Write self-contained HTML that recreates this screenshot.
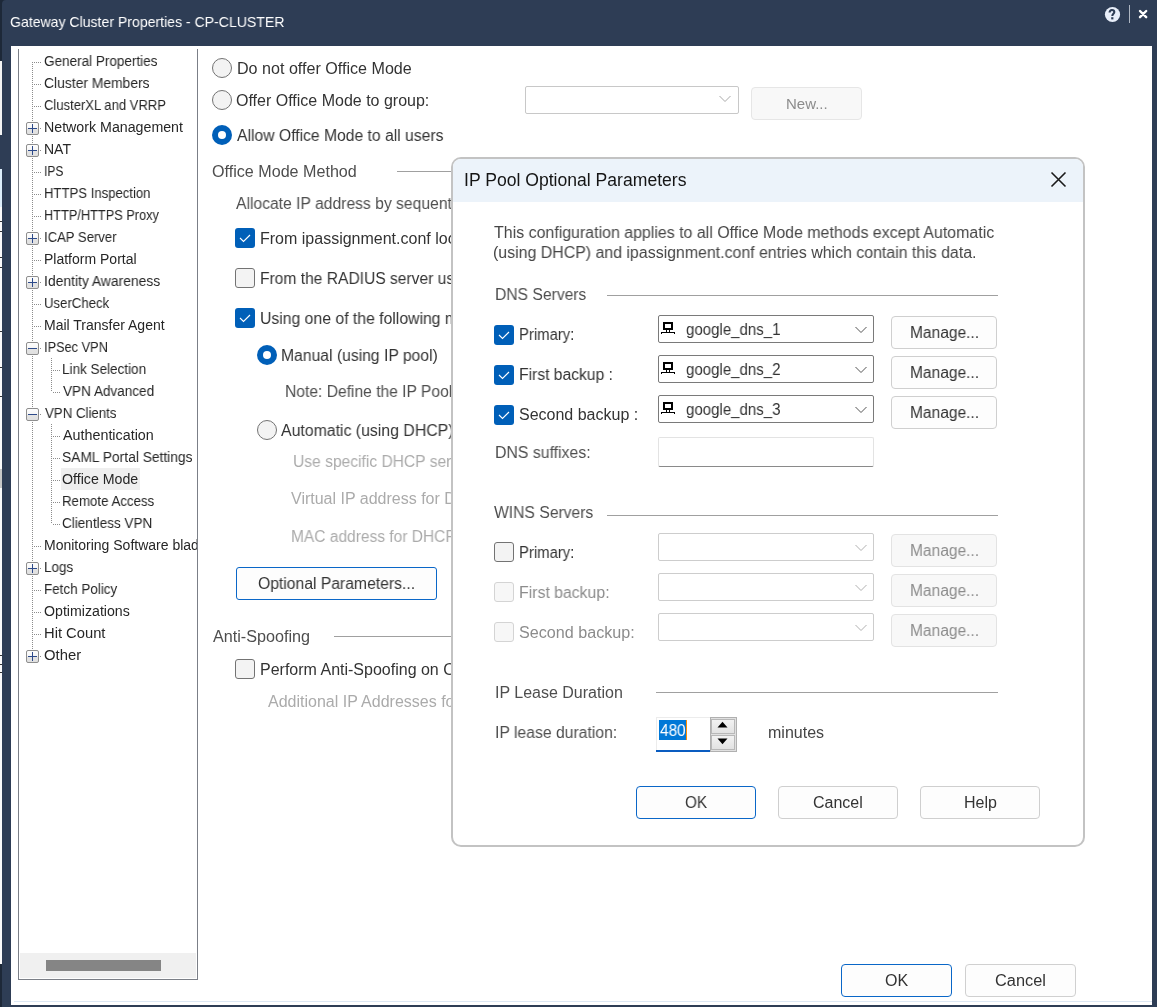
<!DOCTYPE html><html><head><meta charset="utf-8"><title>Gateway Cluster Properties</title><style>
html,body{margin:0;padding:0}body{width:1157px;height:1007px;position:relative;overflow:hidden;background:#fff;font-family:"Liberation Sans",sans-serif}
.t{position:absolute;white-space:nowrap;transform-origin:0 0;will-change:transform}
div{box-sizing:border-box}
</style></head><body>
<div style="position:absolute;left:0px;top:0px;width:8px;height:61px;background:#1d2838"></div>
<div style="position:absolute;left:0px;top:61px;width:2px;height:74px;background:#f4f4f4"></div>
<div style="position:absolute;left:0px;top:135px;width:2px;height:34px;background:#2e3d55"></div>
<div style="position:absolute;left:0px;top:169px;width:2px;height:38px;background:#ddeefa"></div>
<div style="position:absolute;left:0px;top:207px;width:2px;height:757px;background:#fafafa"></div>
<div style="position:absolute;left:0px;top:221px;width:2px;height:1px;background:#333"></div>
<div style="position:absolute;left:0px;top:231px;width:2px;height:1px;background:#333"></div>
<div style="position:absolute;left:0px;top:257px;width:2px;height:1px;background:#333"></div>
<div style="position:absolute;left:0px;top:267px;width:2px;height:1px;background:#333"></div>
<div style="position:absolute;left:0px;top:331px;width:2px;height:1px;background:#333"></div>
<div style="position:absolute;left:0px;top:367px;width:2px;height:1px;background:#333"></div>
<div style="position:absolute;left:0px;top:396px;width:2px;height:1px;background:#333"></div>
<div style="position:absolute;left:0px;top:655px;width:2px;height:1px;background:#333"></div>
<div style="position:absolute;left:0px;top:664px;width:2px;height:1px;background:#333"></div>
<div style="position:absolute;left:0px;top:672px;width:2px;height:1px;background:#333"></div>
<div style="position:absolute;left:0px;top:469px;width:2px;height:19px;background:#c8c8c8"></div>
<div style="position:absolute;left:0px;top:964px;width:2px;height:43px;background:#1d2838"></div>
<div style="position:absolute;left:2px;top:0px;width:1155px;height:1007px;background:#2e3d55;border-top-left-radius:4px"></div>
<div style="position:absolute;left:11px;top:46px;width:1141px;height:959px;background:#fff"></div>
<div class="t" style="left:10.06px;top:14px;font-size:15px;line-height:15px;color:#ffffff;transform:scaleX(0.9381);">Gateway Cluster Properties - CP-CLUSTER</div>
<svg style="position:absolute;left:1104px;top:6px" width="18" height="18" viewBox="0 0 18 18"><circle cx="8.5" cy="8.5" r="7.6" fill="#e8eef9"/><path d="M5.6 6.6 C5.6 4.8 6.6 4 7.9 4 C9.3 4 10.3 4.9 10.3 6.1 C10.3 7.7 8.3 7.9 8.3 9.9" fill="none" stroke="#2e3d55" stroke-width="2.1"/><rect x="7.2" y="11.2" width="2.2" height="2.2" fill="#2e3d55"/></svg>
<div style="position:absolute;left:1129px;top:5px;width:1px;height:18px;background:#aeb6c2"></div>
<svg style="position:absolute;left:1137px;top:8px" width="12" height="12" viewBox="0 0 12 12"><path d="M3 3 L9.2 9.2 M9.2 3 L3 9.2" stroke="#ffffff" stroke-width="2.4" stroke-linecap="round"/></svg>
<div style="position:absolute;left:18px;top:49px;width:1px;height:931px;background:#7b7f87"></div>
<div style="position:absolute;left:197px;top:49px;width:1px;height:931px;background:#7b7f87"></div>
<div style="position:absolute;left:18px;top:979px;width:180px;height:1px;background:#7b7f87"></div>
<div style="position:absolute;left:20px;top:953px;width:176px;height:25px;background:#f0f0f0"></div>
<div style="position:absolute;left:46px;top:960px;width:115px;height:11px;background:#858585"></div>
<div style="position:absolute;left:19px;top:49px;width:178px;height:904px;overflow:hidden">
<div style="position:absolute;left:42px;top:419px;width:79px;height:22px;background:#efefef"></div>
<div style="position:absolute;left:13px;top:13px;width:1px;height:595px;background-image:linear-gradient(to bottom,#8c8c8c 50%,transparent 50%);background-size:1px 2px"></div>
<div style="position:absolute;left:32px;top:309px;width:1px;height:34px;background-image:linear-gradient(to bottom,#8c8c8c 50%,transparent 50%);background-size:1px 2px"></div>
<div style="position:absolute;left:32px;top:375px;width:1px;height:100px;background-image:linear-gradient(to bottom,#8c8c8c 50%,transparent 50%);background-size:1px 2px"></div>
<div style="position:absolute;left:15px;top:13px;width:8px;height:1px;background-image:linear-gradient(to right,#8c8c8c 50%,transparent 50%);background-size:2px 1px"></div>
<div class="t" style="left:25.03px;top:5px;font-size:14px;line-height:14px;color:#262626;transform:scaleX(0.9655);">General Properties</div>
<div style="position:absolute;left:15px;top:35px;width:8px;height:1px;background-image:linear-gradient(to right,#8c8c8c 50%,transparent 50%);background-size:2px 1px"></div>
<div class="t" style="left:25.01px;top:27px;font-size:14px;line-height:14px;color:#262626;transform:scaleX(0.9905);">Cluster Members</div>
<div style="position:absolute;left:15px;top:57px;width:8px;height:1px;background-image:linear-gradient(to right,#8c8c8c 50%,transparent 50%);background-size:2px 1px"></div>
<div class="t" style="left:25.07px;top:49px;font-size:14px;line-height:14px;color:#262626;transform:scaleX(0.9308);">ClusterXL and VRRP</div>
<div style="position:absolute;left:15px;top:79px;width:8px;height:1px;background-image:linear-gradient(to right,#8c8c8c 50%,transparent 50%);background-size:2px 1px"></div>
<div class="t" style="left:24.99px;top:71px;font-size:14px;line-height:14px;color:#262626;transform:scaleX(1.0147);">Network Management</div>
<div style="position:absolute;left:15px;top:101px;width:8px;height:1px;background-image:linear-gradient(to right,#8c8c8c 50%,transparent 50%);background-size:2px 1px"></div>
<div class="t" style="left:25.00px;top:93px;font-size:14px;line-height:14px;color:#262626;">NAT</div>
<div style="position:absolute;left:15px;top:123px;width:8px;height:1px;background-image:linear-gradient(to right,#8c8c8c 50%,transparent 50%);background-size:2px 1px"></div>
<div class="t" style="left:25.14px;top:115px;font-size:14px;line-height:14px;color:#262626;transform:scaleX(0.8571);">IPS</div>
<div style="position:absolute;left:15px;top:145px;width:8px;height:1px;background-image:linear-gradient(to right,#8c8c8c 50%,transparent 50%);background-size:2px 1px"></div>
<div class="t" style="left:25.06px;top:137px;font-size:14px;line-height:14px;color:#262626;transform:scaleX(0.9375);">HTTPS Inspection</div>
<div style="position:absolute;left:15px;top:167px;width:8px;height:1px;background-image:linear-gradient(to right,#8c8c8c 50%,transparent 50%);background-size:2px 1px"></div>
<div class="t" style="left:25.09px;top:159px;font-size:14px;line-height:14px;color:#262626;transform:scaleX(0.9120);">HTTP/HTTPS Proxy</div>
<div style="position:absolute;left:15px;top:189px;width:8px;height:1px;background-image:linear-gradient(to right,#8c8c8c 50%,transparent 50%);background-size:2px 1px"></div>
<div class="t" style="left:25.06px;top:181px;font-size:14px;line-height:14px;color:#262626;transform:scaleX(0.9351);">ICAP Server</div>
<div style="position:absolute;left:15px;top:211px;width:8px;height:1px;background-image:linear-gradient(to right,#8c8c8c 50%,transparent 50%);background-size:2px 1px"></div>
<div class="t" style="left:25.00px;top:203px;font-size:14px;line-height:14px;color:#262626;">Platform Portal</div>
<div style="position:absolute;left:15px;top:233px;width:8px;height:1px;background-image:linear-gradient(to right,#8c8c8c 50%,transparent 50%);background-size:2px 1px"></div>
<div class="t" style="left:25.01px;top:225px;font-size:14px;line-height:14px;color:#262626;transform:scaleX(0.9914);">Identity Awareness</div>
<div style="position:absolute;left:15px;top:255px;width:8px;height:1px;background-image:linear-gradient(to right,#8c8c8c 50%,transparent 50%);background-size:2px 1px"></div>
<div class="t" style="left:25.06px;top:247px;font-size:14px;line-height:14px;color:#262626;transform:scaleX(0.9412);">UserCheck</div>
<div style="position:absolute;left:15px;top:277px;width:8px;height:1px;background-image:linear-gradient(to right,#8c8c8c 50%,transparent 50%);background-size:2px 1px"></div>
<div class="t" style="left:25.00px;top:269px;font-size:14px;line-height:14px;color:#262626;">Mail Transfer Agent</div>
<div style="position:absolute;left:15px;top:299px;width:8px;height:1px;background-image:linear-gradient(to right,#8c8c8c 50%,transparent 50%);background-size:2px 1px"></div>
<div class="t" style="left:25.09px;top:291px;font-size:14px;line-height:14px;color:#262626;transform:scaleX(0.9118);">IPSec VPN</div>
<div style="position:absolute;left:34px;top:321px;width:8px;height:1px;background-image:linear-gradient(to right,#8c8c8c 50%,transparent 50%);background-size:2px 1px"></div>
<div class="t" style="left:43.03px;top:313px;font-size:14px;line-height:14px;color:#262626;transform:scaleX(0.9651);">Link Selection</div>
<div style="position:absolute;left:34px;top:343px;width:8px;height:1px;background-image:linear-gradient(to right,#8c8c8c 50%,transparent 50%);background-size:2px 1px"></div>
<div class="t" style="left:44.00px;top:335px;font-size:14px;line-height:14px;color:#262626;transform:scaleX(0.9681);">VPN Advanced</div>
<div style="position:absolute;left:15px;top:365px;width:8px;height:1px;background-image:linear-gradient(to right,#8c8c8c 50%,transparent 50%);background-size:2px 1px"></div>
<div class="t" style="left:26.00px;top:357px;font-size:14px;line-height:14px;color:#262626;transform:scaleX(0.9467);">VPN Clients</div>
<div style="position:absolute;left:34px;top:387px;width:8px;height:1px;background-image:linear-gradient(to right,#8c8c8c 50%,transparent 50%);background-size:2px 1px"></div>
<div class="t" style="left:44.00px;top:379px;font-size:14px;line-height:14px;color:#262626;transform:scaleX(1.0227);">Authentication</div>
<div style="position:absolute;left:34px;top:409px;width:8px;height:1px;background-image:linear-gradient(to right,#8c8c8c 50%,transparent 50%);background-size:2px 1px"></div>
<div class="t" style="left:43.02px;top:401px;font-size:14px;line-height:14px;color:#262626;transform:scaleX(0.9847);">SAML Portal Settings</div>
<div style="position:absolute;left:34px;top:431px;width:8px;height:1px;background-image:linear-gradient(to right,#8c8c8c 50%,transparent 50%);background-size:2px 1px"></div>
<div class="t" style="left:42.99px;top:423px;font-size:14px;line-height:14px;color:#262626;transform:scaleX(1.0135);">Office Mode</div>
<div style="position:absolute;left:34px;top:453px;width:8px;height:1px;background-image:linear-gradient(to right,#8c8c8c 50%,transparent 50%);background-size:2px 1px"></div>
<div class="t" style="left:43.05px;top:445px;font-size:14px;line-height:14px;color:#262626;transform:scaleX(0.9479);">Remote Access</div>
<div style="position:absolute;left:34px;top:475px;width:8px;height:1px;background-image:linear-gradient(to right,#8c8c8c 50%,transparent 50%);background-size:2px 1px"></div>
<div class="t" style="left:43.03px;top:467px;font-size:14px;line-height:14px;color:#262626;transform:scaleX(0.9670);">Clientless VPN</div>
<div style="position:absolute;left:15px;top:497px;width:8px;height:1px;background-image:linear-gradient(to right,#8c8c8c 50%,transparent 50%);background-size:2px 1px"></div>
<div class="t" style="left:25.00px;top:489px;font-size:14px;line-height:14px;color:#262626;">Monitoring Software blades</div>
<div style="position:absolute;left:15px;top:519px;width:8px;height:1px;background-image:linear-gradient(to right,#8c8c8c 50%,transparent 50%);background-size:2px 1px"></div>
<div class="t" style="left:25.03px;top:511px;font-size:14px;line-height:14px;color:#262626;transform:scaleX(0.9655);">Logs</div>
<div style="position:absolute;left:15px;top:541px;width:8px;height:1px;background-image:linear-gradient(to right,#8c8c8c 50%,transparent 50%);background-size:2px 1px"></div>
<div class="t" style="left:25.04px;top:533px;font-size:14px;line-height:14px;color:#262626;transform:scaleX(0.9600);">Fetch Policy</div>
<div style="position:absolute;left:15px;top:563px;width:8px;height:1px;background-image:linear-gradient(to right,#8c8c8c 50%,transparent 50%);background-size:2px 1px"></div>
<div class="t" style="left:24.99px;top:555px;font-size:14px;line-height:14px;color:#262626;transform:scaleX(1.0120);">Optimizations</div>
<div style="position:absolute;left:15px;top:585px;width:8px;height:1px;background-image:linear-gradient(to right,#8c8c8c 50%,transparent 50%);background-size:2px 1px"></div>
<div class="t" style="left:24.95px;top:577px;font-size:14px;line-height:14px;color:#262626;transform:scaleX(1.0526);">Hit Count</div>
<div style="position:absolute;left:15px;top:607px;width:8px;height:1px;background-image:linear-gradient(to right,#8c8c8c 50%,transparent 50%);background-size:2px 1px"></div>
<div class="t" style="left:24.94px;top:599px;font-size:14px;line-height:14px;color:#262626;transform:scaleX(1.0588);">Other</div>
<div style="position:absolute;left:7px;top:73px;width:13px;height:13px;background:linear-gradient(#fdfdfd 0%,#f6f6f6 45%,#e3e3e3 55%,#e0e0e0 100%);border:1px solid #8e8e8e;border-radius:2px"></div>
<div style="position:absolute;left:9px;top:79px;width:9px;height:1px;background:#2d4a8a"></div>
<div style="position:absolute;left:13px;top:75px;width:1px;height:9px;background:#2d4a8a"></div>
<div style="position:absolute;left:7px;top:95px;width:13px;height:13px;background:linear-gradient(#fdfdfd 0%,#f6f6f6 45%,#e3e3e3 55%,#e0e0e0 100%);border:1px solid #8e8e8e;border-radius:2px"></div>
<div style="position:absolute;left:9px;top:101px;width:9px;height:1px;background:#2d4a8a"></div>
<div style="position:absolute;left:13px;top:97px;width:1px;height:9px;background:#2d4a8a"></div>
<div style="position:absolute;left:7px;top:183px;width:13px;height:13px;background:linear-gradient(#fdfdfd 0%,#f6f6f6 45%,#e3e3e3 55%,#e0e0e0 100%);border:1px solid #8e8e8e;border-radius:2px"></div>
<div style="position:absolute;left:9px;top:189px;width:9px;height:1px;background:#2d4a8a"></div>
<div style="position:absolute;left:13px;top:185px;width:1px;height:9px;background:#2d4a8a"></div>
<div style="position:absolute;left:7px;top:227px;width:13px;height:13px;background:linear-gradient(#fdfdfd 0%,#f6f6f6 45%,#e3e3e3 55%,#e0e0e0 100%);border:1px solid #8e8e8e;border-radius:2px"></div>
<div style="position:absolute;left:9px;top:233px;width:9px;height:1px;background:#2d4a8a"></div>
<div style="position:absolute;left:13px;top:229px;width:1px;height:9px;background:#2d4a8a"></div>
<div style="position:absolute;left:7px;top:293px;width:13px;height:13px;background:linear-gradient(#fdfdfd 0%,#f6f6f6 45%,#e3e3e3 55%,#e0e0e0 100%);border:1px solid #8e8e8e;border-radius:2px"></div>
<div style="position:absolute;left:9px;top:299px;width:9px;height:1px;background:#2d4a8a"></div>
<div style="position:absolute;left:7px;top:359px;width:13px;height:13px;background:linear-gradient(#fdfdfd 0%,#f6f6f6 45%,#e3e3e3 55%,#e0e0e0 100%);border:1px solid #8e8e8e;border-radius:2px"></div>
<div style="position:absolute;left:9px;top:365px;width:9px;height:1px;background:#2d4a8a"></div>
<div style="position:absolute;left:7px;top:513px;width:13px;height:13px;background:linear-gradient(#fdfdfd 0%,#f6f6f6 45%,#e3e3e3 55%,#e0e0e0 100%);border:1px solid #8e8e8e;border-radius:2px"></div>
<div style="position:absolute;left:9px;top:519px;width:9px;height:1px;background:#2d4a8a"></div>
<div style="position:absolute;left:13px;top:515px;width:1px;height:9px;background:#2d4a8a"></div>
<div style="position:absolute;left:7px;top:601px;width:13px;height:13px;background:linear-gradient(#fdfdfd 0%,#f6f6f6 45%,#e3e3e3 55%,#e0e0e0 100%);border:1px solid #8e8e8e;border-radius:2px"></div>
<div style="position:absolute;left:9px;top:607px;width:9px;height:1px;background:#2d4a8a"></div>
<div style="position:absolute;left:13px;top:603px;width:1px;height:9px;background:#2d4a8a"></div>
</div>
<div style="position:absolute;left:212px;top:58px;width:20px;height:20px;border-radius:50%;background:#f3f3f3;border:1px solid #737373"></div>
<div class="t" style="left:236.99px;top:61px;font-size:16px;line-height:16px;color:#333333;transform:scaleX(1.0058);">Do not offer Office Mode</div>
<div style="position:absolute;left:212px;top:90px;width:20px;height:20px;border-radius:50%;background:#f3f3f3;border:1px solid #737373"></div>
<div class="t" style="left:236.00px;top:93px;font-size:16px;line-height:16px;color:#333333;">Offer Office Mode to group:</div>
<div style="position:absolute;left:525px;top:86px;width:214px;height:28px;border:1px solid #c8c8c8;border-radius:2px;background:#fff"></div>
<svg style="position:absolute;left:719px;top:95px" width="12" height="8" viewBox="0 0 12 8"><path d="M0.5 1 L6 6.5 L11.5 1" fill="none" stroke="#a8a8a8" stroke-width="1"/></svg>
<div style="position:absolute;left:751px;top:87px;width:111px;height:33px;border:1px solid #e6e6e6;border-radius:4px;background:#f8f8f8"></div>
<div class="t" style="left:786.00px;top:96px;font-size:15px;line-height:15px;color:#8c8c8c;">New...</div>
<div style="position:absolute;left:212px;top:125px;width:20px;height:20px;border-radius:50%;background:#005fb8"></div>
<div style="position:absolute;left:218px;top:131px;width:8px;height:8px;border-radius:50%;background:#fff"></div>
<div class="t" style="left:237.00px;top:128px;font-size:16px;line-height:16px;color:#333333;transform:scaleX(0.9810);">Allow Office Mode to all users</div>
<div class="t" style="left:211.99px;top:164px;font-size:16px;line-height:16px;color:#4e4e4e;transform:scaleX(1.0070);">Office Mode Method</div>
<div style="position:absolute;left:397px;top:171px;width:60px;height:1px;background:#a0a0a0"></div>
<div class="t" style="left:236.00px;top:196px;font-size:16px;line-height:16px;color:#4e4e4e;transform:scaleX(0.9800);">Allocate IP address by sequential order</div>
<div style="position:absolute;left:235px;top:228px;width:20px;height:20px;border-radius:3px;background:#005fb8"></div>
<svg style="position:absolute;left:235px;top:228px" width="20" height="20" viewBox="0 0 20 20"><path d="M5 10 L8.5 13.5 L15 7" fill="none" stroke="#fff" stroke-width="1.1"/></svg>
<div class="t" style="left:260.00px;top:231px;font-size:16px;line-height:16px;color:#333333;">From ipassignment.conf located</div>
<div style="position:absolute;left:235px;top:268px;width:20px;height:20px;border-radius:3px;background:#f3f3f3;border:1px solid #737373"></div>
<div class="t" style="left:260.02px;top:271px;font-size:16px;line-height:16px;color:#333333;transform:scaleX(0.9750);">From the RADIUS server used</div>
<div style="position:absolute;left:235px;top:308px;width:20px;height:20px;border-radius:3px;background:#005fb8"></div>
<svg style="position:absolute;left:235px;top:308px" width="20" height="20" viewBox="0 0 20 20"><path d="M5 10 L8.5 13.5 L15 7" fill="none" stroke="#fff" stroke-width="1.1"/></svg>
<div class="t" style="left:260.01px;top:311px;font-size:16px;line-height:16px;color:#333333;transform:scaleX(0.9850);">Using one of the following methods</div>
<div style="position:absolute;left:257px;top:345px;width:20px;height:20px;border-radius:50%;background:#005fb8"></div>
<div style="position:absolute;left:263px;top:351px;width:8px;height:8px;border-radius:50%;background:#fff"></div>
<div class="t" style="left:281.02px;top:348px;font-size:16px;line-height:16px;color:#333333;transform:scaleX(0.9810);">Manual (using IP pool)</div>
<div class="t" style="left:285.02px;top:384px;font-size:16px;line-height:16px;color:#4e4e4e;transform:scaleX(0.9760);">Note: Define the IP Pool</div>
<div style="position:absolute;left:257px;top:420px;width:20px;height:20px;border-radius:50%;background:#f3f3f3;border:1px solid #737373"></div>
<div class="t" style="left:281.00px;top:423px;font-size:16px;line-height:16px;color:#333333;transform:scaleX(0.9900);">Automatic (using DHCP)</div>
<div class="t" style="left:293.02px;top:454px;font-size:16px;line-height:16px;color:#ababab;transform:scaleX(0.9750);">Use specific DHCP server</div>
<div class="t" style="left:291.00px;top:491px;font-size:16px;line-height:16px;color:#ababab;">Virtual IP address for DHCP</div>
<div class="t" style="left:291.03px;top:529px;font-size:16px;line-height:16px;color:#ababab;transform:scaleX(0.9700);">MAC address for DHCP</div>
<div style="position:absolute;left:236px;top:567px;width:201px;height:33px;border:1px solid #0a67c8;border-radius:3px;background:#fdfdfd"></div>
<div class="t" style="left:258.02px;top:576px;font-size:16px;line-height:16px;color:#333333;transform:scaleX(0.9810);">Optional Parameters...</div>
<div class="t" style="left:213.00px;top:629px;font-size:16px;line-height:16px;color:#4e4e4e;transform:scaleX(1.0105);">Anti-Spoofing</div>
<div style="position:absolute;left:334px;top:636px;width:120px;height:1px;background:#a0a0a0"></div>
<div style="position:absolute;left:235px;top:659px;width:20px;height:20px;border-radius:3px;background:#f3f3f3;border:1px solid #737373"></div>
<div class="t" style="left:260.00px;top:662px;font-size:16px;line-height:16px;color:#333333;">Perform Anti-Spoofing on Office</div>
<div class="t" style="left:268.00px;top:694px;font-size:16px;line-height:16px;color:#ababab;">Additional IP Addresses for</div>
<div style="position:absolute;left:841px;top:964px;width:111px;height:33px;border:1px solid #0a67c8;border-radius:4px;background:#fdfdfd"></div>
<div class="t" style="left:885.00px;top:973px;font-size:16px;line-height:16px;color:#333333;">OK</div>
<div style="position:absolute;left:965px;top:964px;width:111px;height:33px;border:1px solid #d0d0d0;border-radius:4px;background:#fdfdfd"></div>
<div class="t" style="left:994.98px;top:973px;font-size:16px;line-height:16px;color:#333333;transform:scaleX(1.0208);">Cancel</div>
<div style="position:absolute;left:14px;top:1001px;width:1138px;height:1px;background:#dce7f3"></div>
<div style="position:absolute;left:451px;top:157px;width:634px;height:690px;border:2px solid #c3c3c3;border-radius:10px;background:#fff;overflow:hidden">
<div style="position:absolute;left:0;top:0;width:630px;height:43px;background:#ecf3fa"></div>
</div>
<div class="t" style="left:464.00px;top:172px;font-size:17.5px;line-height:17.5px;color:#151515;transform:scaleX(1.0045);">IP Pool Optional Parameters</div>
<svg style="position:absolute;left:1050px;top:171px" width="17" height="17" viewBox="0 0 17 17"><path d="M1.5 1.5 L15.5 15.5 M15.5 1.5 L1.5 15.5" stroke="#1a1a1a" stroke-width="1.6"/></svg>
<div class="t" style="left:494.00px;top:225px;font-size:16px;line-height:16px;color:#454545;transform:scaleX(0.9960);">This configuration applies to all Office Mode methods except Automatic</div>
<div class="t" style="left:493.01px;top:245px;font-size:16px;line-height:16px;color:#454545;transform:scaleX(0.9938);">(using DHCP) and ipassignment.conf entries which contain this data.</div>
<div class="t" style="left:495.02px;top:287px;font-size:16px;line-height:16px;color:#4e4e4e;transform:scaleX(0.9783);">DNS Servers</div>
<div style="position:absolute;left:607px;top:295px;width:391px;height:1px;background:#a0a0a0"></div>
<div style="position:absolute;left:494px;top:325px;width:20px;height:20px;border-radius:3px;background:#005fb8"></div>
<svg style="position:absolute;left:494px;top:325px" width="20" height="20" viewBox="0 0 20 20"><path d="M5 10 L8.5 13.5 L15 7" fill="none" stroke="#fff" stroke-width="1.1"/></svg>
<div class="t" style="left:519.07px;top:327px;font-size:16px;line-height:16px;color:#333333;transform:scaleX(0.9298);">Primary:</div>
<div style="position:absolute;left:658px;top:315px;width:216px;height:28px;border:1px solid #7a7a7a;border-radius:2px;background:#fff"></div>
<svg style="position:absolute;left:855px;top:326px" width="12" height="8" viewBox="0 0 12 8"><path d="M0.5 1 L6 6.5 L11.5 1" fill="none" stroke="#555" stroke-width="1"/></svg>
<svg style="position:absolute;left:661px;top:322px" width="15" height="13" viewBox="0 0 15 13"><g fill="#000" shape-rendering="crispEdges"><rect x="2" y="0" width="10" height="2"/><rect x="2" y="6" width="10" height="2"/><rect x="2" y="0" width="2" height="8"/><rect x="10" y="0" width="2" height="8"/><rect x="5" y="8" width="1" height="2"/><rect x="8" y="8" width="1" height="2"/><rect x="0" y="10" width="14" height="1"/><rect x="0" y="10" width="1" height="2"/><rect x="13" y="10" width="1" height="2"/></g></svg>
<div class="t" style="left:686.06px;top:322px;font-size:16px;line-height:16px;color:#333333;transform:scaleX(0.9394);">google_dns_1</div>
<div style="position:absolute;left:891px;top:316px;width:106px;height:33px;border:1px solid #cfcfcf;border-radius:4px;background:#fdfdfd"></div>
<div class="t" style="left:910.03px;top:325px;font-size:16px;line-height:16px;color:#333333;transform:scaleX(0.9710);">Manage...</div>
<div style="position:absolute;left:494px;top:365px;width:20px;height:20px;border-radius:3px;background:#005fb8"></div>
<svg style="position:absolute;left:494px;top:365px" width="20" height="20" viewBox="0 0 20 20"><path d="M5 10 L8.5 13.5 L15 7" fill="none" stroke="#fff" stroke-width="1.1"/></svg>
<div class="t" style="left:519.02px;top:367px;font-size:16px;line-height:16px;color:#333333;transform:scaleX(0.9787);">First backup :</div>
<div style="position:absolute;left:658px;top:355px;width:216px;height:28px;border:1px solid #7a7a7a;border-radius:2px;background:#fff"></div>
<svg style="position:absolute;left:855px;top:366px" width="12" height="8" viewBox="0 0 12 8"><path d="M0.5 1 L6 6.5 L11.5 1" fill="none" stroke="#555" stroke-width="1"/></svg>
<svg style="position:absolute;left:661px;top:362px" width="15" height="13" viewBox="0 0 15 13"><g fill="#000" shape-rendering="crispEdges"><rect x="2" y="0" width="10" height="2"/><rect x="2" y="6" width="10" height="2"/><rect x="2" y="0" width="2" height="8"/><rect x="10" y="0" width="2" height="8"/><rect x="5" y="8" width="1" height="2"/><rect x="8" y="8" width="1" height="2"/><rect x="0" y="10" width="14" height="1"/><rect x="0" y="10" width="1" height="2"/><rect x="13" y="10" width="1" height="2"/></g></svg>
<div class="t" style="left:686.06px;top:362px;font-size:16px;line-height:16px;color:#333333;transform:scaleX(0.9394);">google_dns_2</div>
<div style="position:absolute;left:891px;top:356px;width:106px;height:33px;border:1px solid #cfcfcf;border-radius:4px;background:#fdfdfd"></div>
<div class="t" style="left:910.03px;top:365px;font-size:16px;line-height:16px;color:#333333;transform:scaleX(0.9710);">Manage...</div>
<div style="position:absolute;left:494px;top:405px;width:20px;height:20px;border-radius:3px;background:#005fb8"></div>
<svg style="position:absolute;left:494px;top:405px" width="20" height="20" viewBox="0 0 20 20"><path d="M5 10 L8.5 13.5 L15 7" fill="none" stroke="#fff" stroke-width="1.1"/></svg>
<div class="t" style="left:519.00px;top:407px;font-size:16px;line-height:16px;color:#333333;">Second backup :</div>
<div style="position:absolute;left:658px;top:395px;width:216px;height:28px;border:1px solid #7a7a7a;border-radius:2px;background:#fff"></div>
<svg style="position:absolute;left:855px;top:406px" width="12" height="8" viewBox="0 0 12 8"><path d="M0.5 1 L6 6.5 L11.5 1" fill="none" stroke="#555" stroke-width="1"/></svg>
<svg style="position:absolute;left:661px;top:402px" width="15" height="13" viewBox="0 0 15 13"><g fill="#000" shape-rendering="crispEdges"><rect x="2" y="0" width="10" height="2"/><rect x="2" y="6" width="10" height="2"/><rect x="2" y="0" width="2" height="8"/><rect x="10" y="0" width="2" height="8"/><rect x="5" y="8" width="1" height="2"/><rect x="8" y="8" width="1" height="2"/><rect x="0" y="10" width="14" height="1"/><rect x="0" y="10" width="1" height="2"/><rect x="13" y="10" width="1" height="2"/></g></svg>
<div class="t" style="left:686.06px;top:402px;font-size:16px;line-height:16px;color:#333333;transform:scaleX(0.9394);">google_dns_3</div>
<div style="position:absolute;left:891px;top:396px;width:106px;height:33px;border:1px solid #cfcfcf;border-radius:4px;background:#fdfdfd"></div>
<div class="t" style="left:910.03px;top:405px;font-size:16px;line-height:16px;color:#333333;transform:scaleX(0.9710);">Manage...</div>
<div class="t" style="left:495.01px;top:445px;font-size:16px;line-height:16px;color:#4e4e4e;transform:scaleX(0.9894);">DNS suffixes:</div>
<div style="position:absolute;left:658px;top:437px;width:216px;height:30px;border:1px solid #e3e3e3;border-bottom:1px solid #8a8a8a;border-radius:2px;background:#fff"></div>
<div class="t" style="left:494.00px;top:505px;font-size:16px;line-height:16px;color:#4e4e4e;transform:scaleX(0.9802);">WINS Servers</div>
<div style="position:absolute;left:607px;top:515px;width:391px;height:1px;background:#a0a0a0"></div>
<div style="position:absolute;left:494px;top:542px;width:20px;height:20px;border-radius:3px;background:#f3f3f3;border:1px solid #737373"></div>
<div class="t" style="left:519.07px;top:545px;font-size:16px;line-height:16px;color:#333333;transform:scaleX(0.9298);">Primary:</div>
<div style="position:absolute;left:658px;top:533px;width:216px;height:28px;border:1px solid #cdcdcd;border-radius:2px;background:#fff"></div>
<svg style="position:absolute;left:855px;top:544px" width="12" height="8" viewBox="0 0 12 8"><path d="M0.5 1 L6 6.5 L11.5 1" fill="none" stroke="#b0b0b0" stroke-width="1"/></svg>
<div style="position:absolute;left:891px;top:534px;width:106px;height:33px;border:1px solid #e3e3e3;border-radius:4px;background:#f8f8f8"></div>
<div class="t" style="left:910.03px;top:543px;font-size:16px;line-height:16px;color:#8c8c8c;transform:scaleX(0.9710);">Manage...</div>
<div style="position:absolute;left:494px;top:582px;width:20px;height:20px;border-radius:3px;background:#f7f7f7;border:1px solid #d4d4d4"></div>
<div class="t" style="left:519.01px;top:585px;font-size:16px;line-height:16px;color:#8c8c8c;transform:scaleX(0.9888);">First backup:</div>
<div style="position:absolute;left:658px;top:573px;width:216px;height:28px;border:1px solid #cdcdcd;border-radius:2px;background:#fff"></div>
<svg style="position:absolute;left:855px;top:584px" width="12" height="8" viewBox="0 0 12 8"><path d="M0.5 1 L6 6.5 L11.5 1" fill="none" stroke="#b0b0b0" stroke-width="1"/></svg>
<div style="position:absolute;left:891px;top:574px;width:106px;height:33px;border:1px solid #e3e3e3;border-radius:4px;background:#f8f8f8"></div>
<div class="t" style="left:910.03px;top:583px;font-size:16px;line-height:16px;color:#8c8c8c;transform:scaleX(0.9710);">Manage...</div>
<div style="position:absolute;left:494px;top:622px;width:20px;height:20px;border-radius:3px;background:#f7f7f7;border:1px solid #d4d4d4"></div>
<div class="t" style="left:518.99px;top:625px;font-size:16px;line-height:16px;color:#8c8c8c;transform:scaleX(1.0089);">Second backup:</div>
<div style="position:absolute;left:658px;top:613px;width:216px;height:28px;border:1px solid #cdcdcd;border-radius:2px;background:#fff"></div>
<svg style="position:absolute;left:855px;top:624px" width="12" height="8" viewBox="0 0 12 8"><path d="M0.5 1 L6 6.5 L11.5 1" fill="none" stroke="#b0b0b0" stroke-width="1"/></svg>
<div style="position:absolute;left:891px;top:614px;width:106px;height:33px;border:1px solid #e3e3e3;border-radius:4px;background:#f8f8f8"></div>
<div class="t" style="left:910.03px;top:623px;font-size:16px;line-height:16px;color:#8c8c8c;transform:scaleX(0.9710);">Manage...</div>
<div class="t" style="left:495.00px;top:685px;font-size:16px;line-height:16px;color:#4e4e4e;">IP Lease Duration</div>
<div style="position:absolute;left:656px;top:692px;width:342px;height:1px;background:#a0a0a0"></div>
<div class="t" style="left:495.02px;top:725px;font-size:16px;line-height:16px;color:#4e4e4e;transform:scaleX(0.9836);">IP lease duration:</div>
<div style="position:absolute;left:656px;top:717px;width:55px;height:35px;border:1px solid #ececec;border-right:none;border-bottom:none;background:#fff"></div>
<div style="position:absolute;left:656px;top:750px;width:54px;height:2px;background:#0a5cc0"></div>
<div style="position:absolute;left:659px;top:720px;width:28px;height:20px;background:#0078d7"></div>
<div style="position:absolute;left:686px;top:720px;width:1px;height:20px;background:#ff8c00"></div>
<div class="t" style="left:660.00px;top:723px;font-size:16px;line-height:16px;color:#ffffff;transform:scaleX(0.9615);">480</div>
<div style="position:absolute;left:710px;top:717px;width:27px;height:35px;border:1px solid #b0b0b0;background:#e0e0e0"></div>
<div style="position:absolute;left:711px;top:719px;width:24px;height:15px;border:1px solid #b8b8b8;background:linear-gradient(#f2f2f2,#e2e2e2)"></div>
<div style="position:absolute;left:711px;top:735px;width:24px;height:15px;border:1px solid #b8b8b8;background:linear-gradient(#f2f2f2,#e2e2e2)"></div>
<svg style="position:absolute;left:717px;top:721px" width="11" height="7" viewBox="0 0 11 7"><path d="M0.5 6.5 L5.5 0.8 L10.5 6.5 Z" fill="#000"/></svg>
<svg style="position:absolute;left:717px;top:738px" width="11" height="7" viewBox="0 0 11 7"><path d="M0.5 0.5 L5.5 6.2 L10.5 0.5 Z" fill="#000"/></svg>
<div class="t" style="left:768.00px;top:725px;font-size:16px;line-height:16px;color:#454545;">minutes</div>
<div style="position:absolute;left:636px;top:786px;width:120px;height:33px;border:1px solid #0a67c8;border-radius:4px;background:#fdfdfd"></div>
<div class="t" style="left:685.05px;top:795px;font-size:16px;line-height:16px;color:#333333;transform:scaleX(0.9545);">OK</div>
<div style="position:absolute;left:778px;top:786px;width:120px;height:33px;border:1px solid #cfcfcf;border-radius:4px;background:#fdfdfd"></div>
<div class="t" style="left:813.00px;top:795px;font-size:16px;line-height:16px;color:#333333;">Cancel</div>
<div style="position:absolute;left:920px;top:786px;width:120px;height:33px;border:1px solid #cfcfcf;border-radius:4px;background:#fdfdfd"></div>
<div class="t" style="left:964.00px;top:795px;font-size:16px;line-height:16px;color:#333333;">Help</div>
</body></html>
